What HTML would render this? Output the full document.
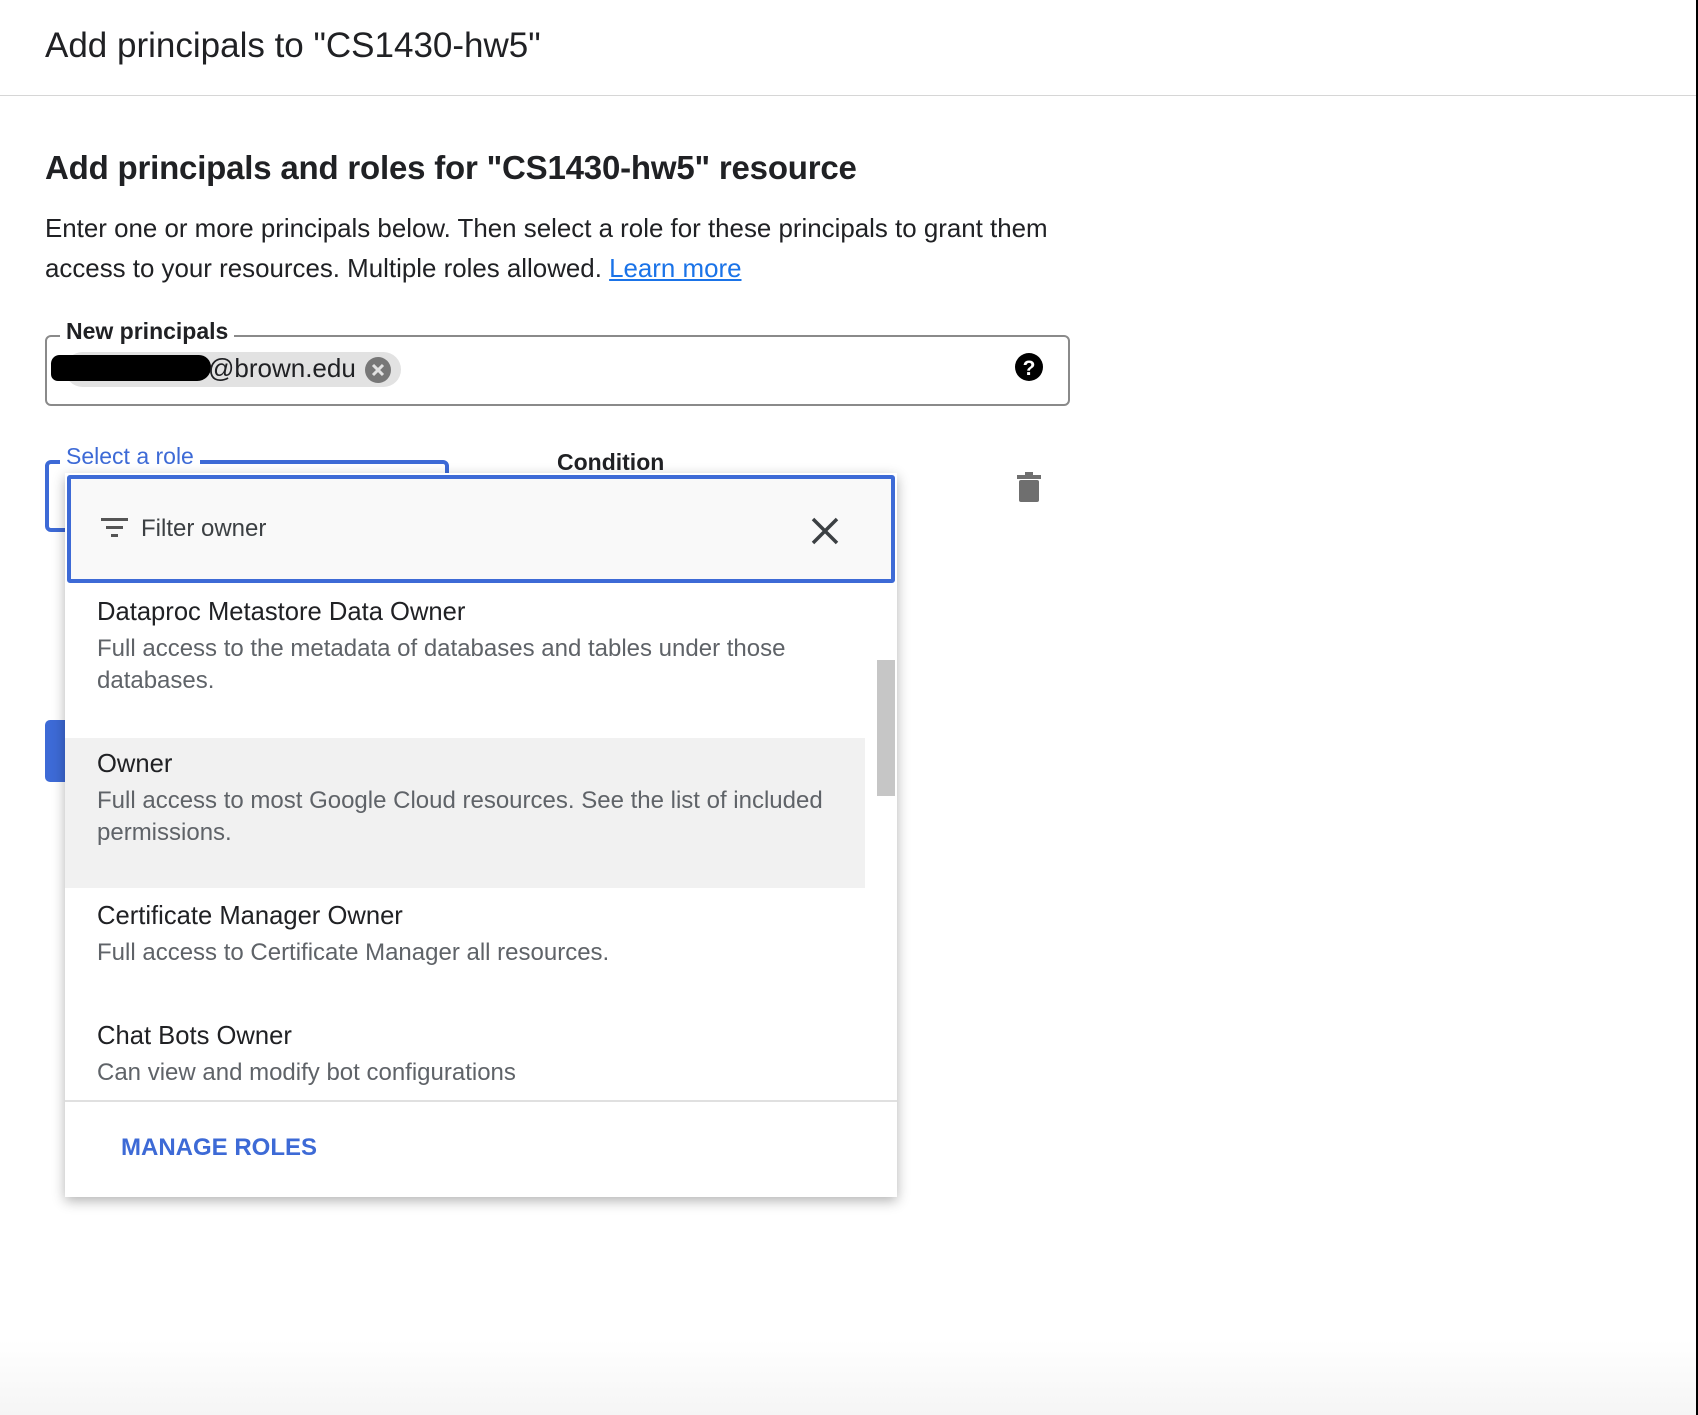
<!DOCTYPE html>
<html><head><meta charset="utf-8"><style>
body{margin:0;width:1698px;height:1415px;position:relative;overflow:hidden;background:linear-gradient(#fff 0,#fff 1340px,#f5f5f5 1415px);font-family:"Liberation Sans",Arial,sans-serif;color:#202124}
.a{position:absolute;white-space:nowrap}
</style></head><body>
<div class="a" style="right:0;top:0;width:2px;height:1415px;background:#000"></div>
<div class="a" style="left:45px;top:26px;font-size:35px;">Add principals to "CS1430-hw5"</div>
<div class="a" style="left:0;top:95px;width:1696px;height:1px;background:#d6d6d6"></div>
<div class="a" style="left:45px;top:149px;font-size:33px;font-weight:bold;letter-spacing:-0.2px">Add principals and roles for "CS1430-hw5" resource</div>
<div class="a" style="left:45px;top:209px;font-size:25.9px;line-height:40px">Enter one or more principals below. Then select a role for these principals to grant them<br>access to your resources. Multiple roles allowed. <span style="color:#1a73e8;text-decoration:underline">Learn more</span></div>
<div class="a" style="left:45px;top:335px;width:1021px;height:67px;border:2px solid #8a8a8a;border-radius:6px"></div>
<div class="a" style="left:60px;top:318px;padding:0 6px;background:#fff;font-size:23px;font-weight:bold">New principals</div>
<div class="a" style="left:65px;top:352px;width:336px;height:35px;border-radius:18px;background:#e2e2e2"></div>
<div class="a" style="left:51px;top:355px;width:160px;height:26px;background:#000;border-radius:10px 14px 16px 8px"></div>
<div class="a" style="left:208px;top:353px;font-size:26px">@brown.edu</div>
<svg class="a" style="left:364px;top:356px" width="28" height="28" viewBox="0 0 28 28"><circle cx="14" cy="14" r="13" fill="#777"/><path d="M9 9l10 10M19 9L9 19" stroke="#e2e2e2" stroke-width="3"/></svg>
<svg class="a" style="left:1014px;top:352px" width="30" height="30" viewBox="0 0 30 30"><circle cx="15" cy="15" r="14" fill="#000"/><text x="15" y="23" text-anchor="middle" font-size="21" font-weight="bold" fill="#fff" font-family="Liberation Sans">?</text></svg>
<div class="a" style="left:45px;top:460px;width:396px;height:64px;border:4px solid #3d6ad6;border-radius:6px"></div>
<div class="a" style="left:60px;top:443px;padding:0 6px;background:#fff;font-size:23px;color:#3d6ad6">Select a role</div>
<div class="a" style="left:557px;top:449px;font-size:23px;font-weight:bold">Condition</div>
<svg class="a" style="left:1017px;top:472px" width="24" height="30" viewBox="0 0 24 30"><rect x="8" y="0" width="8" height="4" fill="#6f6f6f"/><rect x="0" y="3" width="24" height="4" fill="#6f6f6f"/><rect x="2" y="8" width="20" height="22" rx="2" fill="#6f6f6f"/></svg>
<div class="a" style="left:45px;top:720px;width:30px;height:62px;background:#3d6ad6;border-radius:5px"></div>
<div class="a" style="left:65px;top:473px;width:832px;height:724px;background:#fff;box-shadow:0 4px 12px rgba(0,0,0,.3)"></div>
<div class="a" style="left:67px;top:475px;width:820px;height:100px;border:4px solid #3d6ad6;border-radius:3px;background:#f9f9f9"></div>
<svg class="a" style="left:101px;top:518px" width="27" height="20" viewBox="0 0 27 20"><rect x="0" y="0" width="27" height="3" fill="#555"/><rect x="5" y="8" width="17" height="3" fill="#555"/><rect x="10" y="16" width="7" height="3" fill="#555"/></svg>
<div class="a" style="left:141px;top:515px;font-size:24px;color:#3c4043">Filter owner</div>
<svg class="a" style="left:811px;top:517px" width="28" height="28" viewBox="0 0 28 28"><path d="M2 2l24 24M26 2L2 26" stroke="#3c4043" stroke-width="3.5"/></svg>
<div class="a" style="left:65px;top:738px;width:800px;height:150px;background:#f1f1f1"></div>
<div class="a" style="left:877px;top:660px;width:18px;height:136px;background:#c6c6c6"></div>
<div class="a" style="left:97px;top:598px;font-size:25.6px">Dataproc Metastore Data Owner</div>
<div class="a" style="left:97px;top:633px;font-size:24px;line-height:32px;color:#5f6368">Full access to the metadata of databases and tables under those<br>databases.</div>
<div class="a" style="left:97px;top:750px;font-size:25.6px">Owner</div>
<div class="a" style="left:97px;top:785px;font-size:24px;line-height:32px;color:#5f6368">Full access to most Google Cloud resources. See the list of included<br>permissions.</div>
<div class="a" style="left:97px;top:902px;font-size:25.6px">Certificate Manager Owner</div>
<div class="a" style="left:97px;top:939px;font-size:24px;color:#5f6368">Full access to Certificate Manager all resources.</div>
<div class="a" style="left:97px;top:1022px;font-size:25.6px">Chat Bots Owner</div>
<div class="a" style="left:97px;top:1059px;font-size:24px;color:#5f6368">Can view and modify bot configurations</div>
<div class="a" style="left:65px;top:1100px;width:832px;height:2px;background:#e0e0e0"></div>
<div class="a" style="left:121px;top:1134px;font-size:24px;font-weight:bold;color:#3d6ad6">MANAGE ROLES</div>
</body></html>
